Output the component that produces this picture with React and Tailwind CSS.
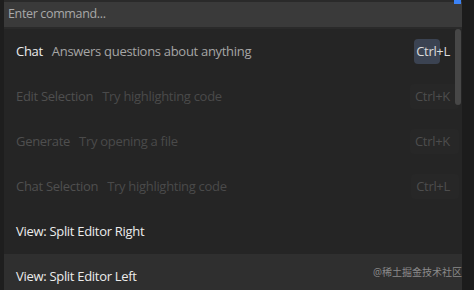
export default function App() {
  const rows = [
    { t: "Chat", d: "Answers questions about anything", k: "Ctrl+L", active: true },
    { t: "Edit Selection", d: "Try highlighting code", k: "Ctrl+K", dis: true },
    { t: "Generate", d: "Try opening a file", k: "Ctrl+K", dis: true },
    { t: "Chat Selection", d: "Try highlighting code", k: "Ctrl+L", dis: true },
    { t: "View: Split Editor Right" },
    { t: "View: Split Editor Left", hl: true },
  ];
  return (
    <div className="w-[474px] h-[290px] overflow-hidden bg-[#1b1b1b] flex" style={{ fontFamily: '"Open Sans", "Noto Sans CJK SC", sans-serif' }}>
      <div className="w-[4px] bg-[#1e1e1e]" />
      <div className="w-[458px] h-[287px] flex flex-col bg-[#252525] relative">
        <div className="h-[29px] pt-[2px] pb-[2px] bg-[#2a2a2a]">
          <div className="h-[25px] bg-[#3a3a3a] flex items-center pl-[4px] text-[12.5px] tracking-[-0.35px] text-[#a8a8a8]">Enter command...</div>
        </div>
        <div className="flex-1 flex flex-col">
          {rows.map((r, i) => (
            <div key={i} className={`h-[45px] shrink-0 flex items-center pl-[12px] pr-[12px] text-[13px] tracking-[-0.3px] ${r.hl ? "bg-[#2f2f2f]" : ""}`}>
              <span className={r.dis ? "text-[#4f4f4f]" : "text-[#ececec]"}>{r.t}</span>
              {r.d && <span className={`ml-[9px] ${r.dis ? "text-[#4a4a4a]" : "text-[#a6a6a6]"}`}>{r.d}</span>}
              <div className="flex-1" />
              {r.k && (
                <span className="relative">
                  <span className={`absolute top-[-3px] bottom-[-3px] rounded-[4px] ${r.active ? "left-[-2px] w-[26px] bg-[#3b4352]" : "left-[-5px] right-[-9px] bg-[#272727]"}`} />
                  <span className={`relative ${r.active ? "text-[#dcdcdc]" : "text-[#4d4d4d]"}`}>{r.k}</span>
                </span>
              )}
            </div>
          ))}
        </div>
        <div className="absolute right-[1px] top-[29px] w-[6px] h-[76px] rounded-[3px] bg-[#474747]" />
        <div className="absolute right-[1px] top-0 w-[7px] h-[4px] bg-[#3b82f6]" />
        <div className="absolute right-0 bottom-[7px] text-[10px] text-[#8a8a8a]">@稀土掘金技术社区</div>
      </div>
      <div className="flex-1 bg-[#1c1c1c]" />
    </div>
  );
}
